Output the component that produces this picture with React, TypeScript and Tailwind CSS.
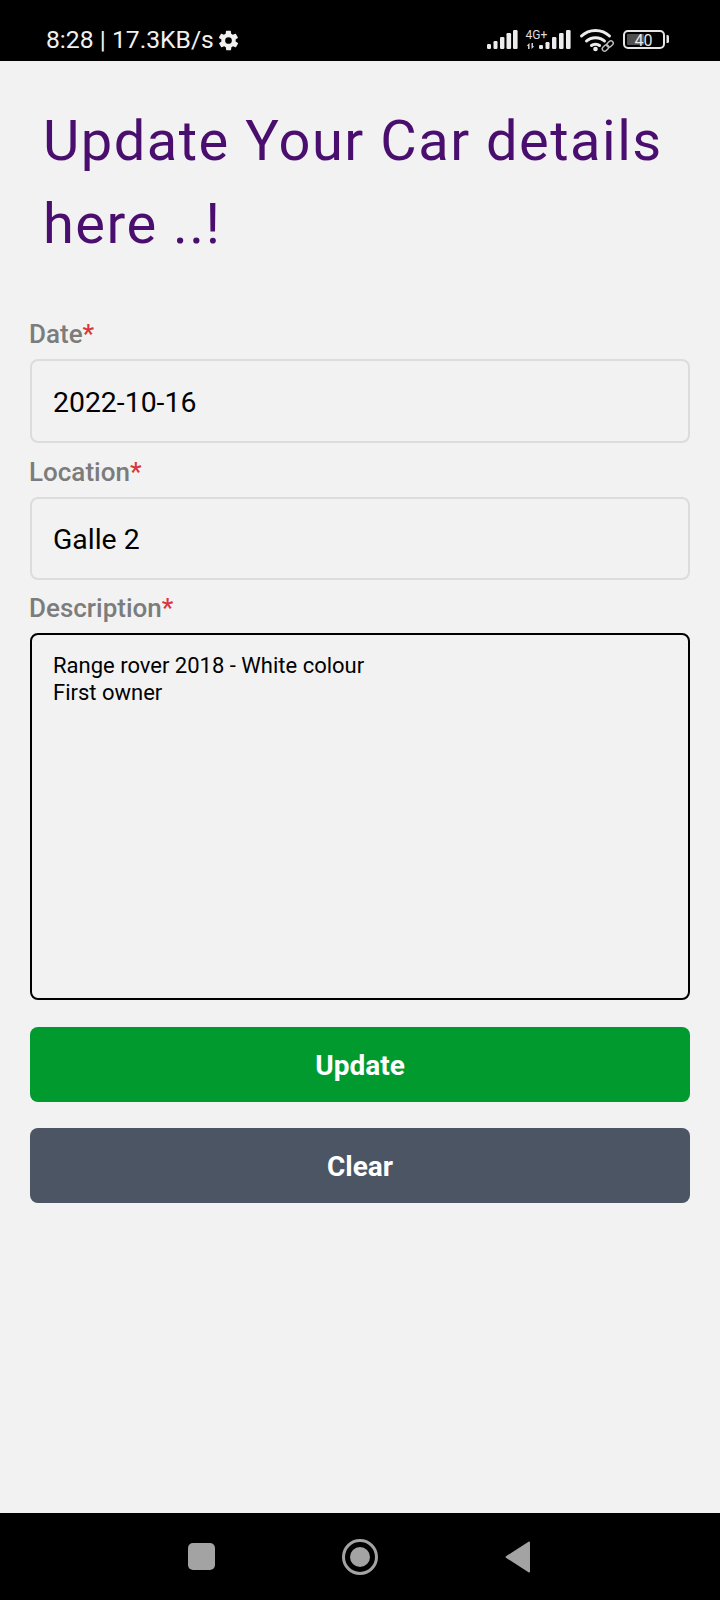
import React from "react";

function StatusIcons() {
  return (
    <svg width="190" height="30" viewBox="480 24 190 30" className="mb-[2px] block">
      <g fill="#ececec">
        <rect x="487" y="44" width="4" height="5" rx="1.2" />
        <rect x="493.5" y="41" width="4" height="8" rx="1.2" />
        <rect x="500" y="37" width="4.4" height="12" rx="1.2" />
        <rect x="506.5" y="33" width="4.6" height="16" rx="1.2" />
        <rect x="513" y="30" width="4.6" height="19" rx="1.2" />
      </g>
      <text x="525.5" y="38.5" fontSize="12" fill="#dddddd" fontFamily="Roboto, sans-serif">4G+</text>
      <g fill="#dedede">
        <path d="M529.5 43v6h-1.4v-3.2h-1.4zM531.5 49v-6h1.4v3.2h1.4z" />
      </g>
      <g fill="#ececec">
        <rect x="539" y="45" width="4" height="4" rx="1.2" />
        <rect x="545.5" y="42" width="4" height="7" rx="1.2" />
        <rect x="552" y="37" width="4.4" height="12" rx="1.2" />
        <rect x="559" y="33" width="4.6" height="16" rx="1.2" />
        <rect x="566" y="30" width="4.6" height="19" rx="1.2" />
      </g>
      <g fill="none" stroke="#ececec" strokeWidth="3" strokeLinecap="round">
        <path d="M581.5 36 C589 28.5 602 28.5 609.5 36" />
        <path d="M586.5 41 C591 36.5 600 36.5 604.5 41" />
        <path d="M591.5 45.5 C593.5 43.8 597.5 43.8 599.5 45.5" />
      </g>
      <circle cx="595.5" cy="49" r="2.3" fill="#ececec" />
      <g fill="none" stroke="#bdbdbd" strokeWidth="1.4">
        <rect x="-3.6" y="-2.3" width="7.2" height="4.6" rx="2.3" transform="translate(605.5 48) rotate(-45)" />
        <rect x="-3.6" y="-2.3" width="7.2" height="4.6" rx="2.3" transform="translate(610 44) rotate(-45)" />
      </g>
      <rect x="624" y="31" width="40" height="17" rx="4" fill="none" stroke="#e6e6e6" strokeWidth="2" />
      <rect x="627" y="34" width="17" height="11" rx="1" fill="#4f4f4f" />
      <path d="M666.5 35h1a1.5 1.5 0 0 1 1.5 1.5v5a1.5 1.5 0 0 1-1.5 1.5h-1z" fill="#e6e6e6" />
      <text x="643.5" y="45.5" textAnchor="middle" fontSize="16" fill="#e6e6e6" fontFamily="Roboto, sans-serif">40</text>
    </svg>
  );
}

function Gear() {
  return (
    <svg width="23" height="23" viewBox="0 0 24 24" fill="#f0f0f0">
      <path fillRule="evenodd" d="M19.4 13a7.6 7.6 0 0 0 0-2l2.2-1.7a.5.5 0 0 0 .1-.7l-2-3.5a.5.5 0 0 0-.6-.2l-2.6 1a7.5 7.5 0 0 0-1.7-1l-.4-2.7a.5.5 0 0 0-.5-.4h-4a.5.5 0 0 0-.5.4l-.4 2.7a7.5 7.5 0 0 0-1.7 1l-2.6-1a.5.5 0 0 0-.6.2l-2 3.5a.5.5 0 0 0 .1.7L4.6 11a7.6 7.6 0 0 0 0 2l-2.2 1.7a.5.5 0 0 0-.1.7l2 3.5a.5.5 0 0 0 .6.2l2.6-1a7.5 7.5 0 0 0 1.7 1l.4 2.7a.5.5 0 0 0 .5.4h4a.5.5 0 0 0 .5-.4l.4-2.7a7.5 7.5 0 0 0 1.7-1l2.6 1a.5.5 0 0 0 .6-.2l2-3.5a.5.5 0 0 0-.1-.7zM12 15.5a3.5 3.5 0 1 1 0-7 3.5 3.5 0 0 1 0 7z" />
    </svg>
  );
}

function Label({ children }: { children: React.ReactNode }) {
  return (
    <label className="-ml-px block text-[26px] leading-[29px] font-medium text-[#7c7c7c]">
      {children}
      <span className="text-[#d9363e]">*</span>
    </label>
  );
}

export default function App() {
  return (
    <div className="flex h-[1600px] w-[720px] flex-col bg-[#f2f2f2] font-['Roboto',sans-serif]">
      <div className="flex h-[61px] shrink-0 items-end justify-between bg-black pb-[5px] pl-[46px] pr-[50px]">
        <div className="flex items-center gap-[3px] text-[24.7px] leading-[32px] text-[#f0f0f0]">
          <span>8:28 | 17.3KB/s</span>
          <Gear />
        </div>
        <StatusIcons />
      </div>

      <main className="flex-1 px-[30px]">
        <h1 className="pl-[13px] pt-[39px] text-[56px] font-normal leading-[83px] tracking-[1.5px] text-[#4a0f6e]">
          Update Your Car details here ..!
        </h1>

        <form className="mt-[54px] flex flex-col">
          <Label>Date</Label>
          <div className="mb-[15px] mt-[10px] flex h-[84px] items-center rounded-[8px] border-2 border-[#dcdcdc] pl-[21px] pr-[22px] pt-[5px] text-[28.4px] text-black">
            2022-10-16
          </div>
          <Label>Location</Label>
          <div className="mb-[14px] mt-[10px] flex h-[83px] items-center rounded-[8px] border-2 border-[#dcdcdc] pl-[21px] pr-[22px] pt-[4px] text-[28.4px] text-black">
            Galle 2
          </div>
          <Label>Description</Label>
          <div className="mt-[10px] h-[367px] rounded-[8px] border-2 border-black pl-[21px] pr-[22px] pt-[18px] text-[22px] leading-[26.5px] text-black">
            <div>Range rover 2018 - White colour</div>
            <div>First owner</div>
          </div>
          <button type="button" className="mt-[27px] h-[75px] rounded-[8px] bg-[#009a2e] pt-[2px] text-[28px] font-bold text-white">
            Update
          </button>
          <button type="button" className="mt-[26px] h-[75px] rounded-[8px] bg-[#4b5563] pt-[2px] text-[28px] font-bold text-white">
            Clear
          </button>
        </form>
      </main>

      <div className="flex h-[87px] shrink-0 items-center bg-black pl-[188px]">
        <div className="h-[27px] w-[27px] rounded-[5px] bg-[#a3a3a3]" />
        <div className="ml-[127px] flex h-[36px] w-[36px] items-center justify-center rounded-full border-[3px] border-[#a3a3a3]">
          <div className="h-[20px] w-[20px] rounded-full bg-[#a3a3a3]" />
        </div>
        <svg width="26" height="32" viewBox="0 0 26 32" className="ml-[127px]">
          <path d="M25 1.5v29a1 1 0 0 1-1.5.8L1 16.8a1 1 0 0 1 0-1.6L23.5.7A1 1 0 0 1 25 1.5z" fill="#a3a3a3" />
        </svg>
      </div>
    </div>
  );
}
